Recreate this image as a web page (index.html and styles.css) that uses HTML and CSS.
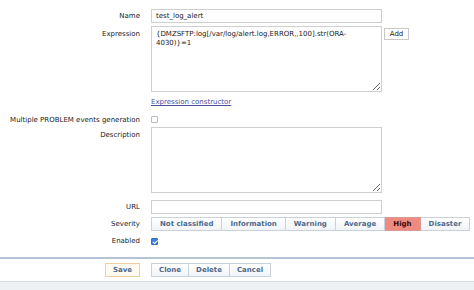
FILE: index.html
```html
<!DOCTYPE html>
<html lang="en">
<head>
  <meta charset="UTF-8" />
  <title>Trigger</title>
  <link rel="stylesheet" href="styles.css">
</head>
<body>

  <div class="form">
    <label class="lbl">Name</label>
    <div class="field"><input class="txt" type="text" value="test_log_alert" /></div>

    <label class="lbl top">Expression</label>
    <div class="field row">
      <textarea class="area">{DMZSFTP:log[/var/log/alert.log,ERROR,,100].str(ORA-4030)}=1</textarea>
      <button class="btn small">Add</button>
    </div>

    <span class="lbl c"></span>
    <div class="field c"><a href="#" class="link">Expression constructor</a></div>

    <label class="lbl c">Multiple PROBLEM events generation</label>
    <div class="field c"><input type="checkbox" class="chk" /></div>

    <label class="lbl top">Description</label>
    <div class="field"><textarea class="area"></textarea></div>

    <label class="lbl">URL</label>
    <div class="field"><input class="txt" type="text" /></div>

    <label class="lbl">Severity</label>
    <div class="field">
      <div class="severity">
        <button class="sev">Not classified</button>
        <button class="sev">Information</button>
        <button class="sev">Warning</button>
        <button class="sev">Average</button>
        <button class="sev high">High</button>
        <button class="sev">Disaster</button>
      </div>
    </div>

    <label class="lbl c">Enabled</label>
    <div class="field c"><input type="checkbox" class="chk" checked /></div>
  </div>

  <div class="footer">
    <div class="footer-left"><button class="btn main">Save</button></div>
    <div class="group">
      <button class="btn">Clone</button>
      <button class="btn">Delete</button>
      <button class="btn">Cancel</button>
    </div>
  </div>
  <div class="bottom"></div>

</body>
</html>
```

FILE: styles.css
```css
body {
  margin: 0;
  background-color: #fff;
  color: #1f1f1f;
  font-family: 'DejaVu Sans', Verdana, sans-serif;
  font-size: 7px;
}
.form {
  display: grid;
  grid-template-columns: 140px 1fr;
  grid-template-rows: 17px 66px 20px 15px 73px 17px 14px 20px;
  column-gap: 11px;
  padding-top: 9px;
  align-items: start;
}
.lbl {
  text-align: right;
  color: #222;
  white-space: nowrap;
  line-height: 14px;
}
.lbl.top {
  padding-top: 1px;
}
.field {
  display: flex;
  align-items: center;
}
.c {
  align-self: center;
}
.row {
  align-items: flex-start;
  gap: 2px;
}
.txt {
  box-sizing: border-box;
  width: 231px;
  height: 14px;
  border: 1px solid #cfcfcf;
  padding: 0 4px;
  font: inherit;
  color: #222;
  outline: none;
}
.area {
  box-sizing: border-box;
  width: 231px;
  height: 66px;
  border: 1px solid #cfcfcf;
  padding: 3px 4px;
  font: inherit;
  line-height: 9px;
  color: #222;
  margin: 0;
  display: block;
}
.link {
  color: #4a4f9c;
  text-decoration: underline;
}
.chk {
  appearance: none;
  margin: 0;
  width: 7px;
  height: 7px;
  border: 1px solid #bbb;
  border-radius: 1px;
  background: #fff;
  position: relative;
  box-sizing: border-box;
}
.chk:checked {
  background: #3b83e0;
  border-color: #2f6fc4;
}
.chk:checked::after {
  content: "";
  position: absolute;
  left: 1.5px;
  top: 0;
  width: 2px;
  height: 3.5px;
  border: solid #fff;
  border-width: 0 1px 1px 0;
  transform: rotate(45deg);
}

.btn {
  font: inherit;
  font-weight: bold;
  color: #4f6a8c;
  background: linear-gradient(#ffffff, #f1f4f7);
  border: 1px solid #c9d1da;
  height: 14px;
  padding: 0 7px;
  cursor: pointer;
}
.btn.small {
  font-weight: normal;
  color: #222;
  background: #fff;
  border-color: #c8c8c8;
  height: 12px;
  width: 25px;
  padding: 0;
  margin-top: 2px;
}
.btn.main {
  background: #fffaf0;
  border-color: #f0cf9f;
  width: 35px;
  padding: 0;
}

.severity {
  display: flex;
}
.sev {
  font: inherit;
  font-weight: bold;
  color: #4f6a8c;
  background: linear-gradient(#ffffff, #f1f4f7);
  border: 1px solid #c9d1da;
  border-left-width: 0;
  height: 14px;
  padding: 0 8px;
}
.sev:first-child {
  border-left-width: 1px;
}
.sev.high {
  background: #ef8a80;
  color: #3a0a0a;
  border-color: #d99a93;
}

.footer {
  margin-top: 6px;
  border-top: 2px solid #b5c3d4;
  border-bottom: 1px solid #d6dbe1;
  display: grid;
  grid-template-columns: 140px 1fr;
  column-gap: 11px;
  padding: 4px 0;
}
.footer-left {
  display: flex;
  justify-content: flex-end;
}
.group {
  display: flex;
}
.group .btn {
  border-left-width: 0;
}
.group .btn:first-child {
  border-left-width: 1px;
}
.bottom {
  background: #eef1f4;
  height: 20px;
}
```
